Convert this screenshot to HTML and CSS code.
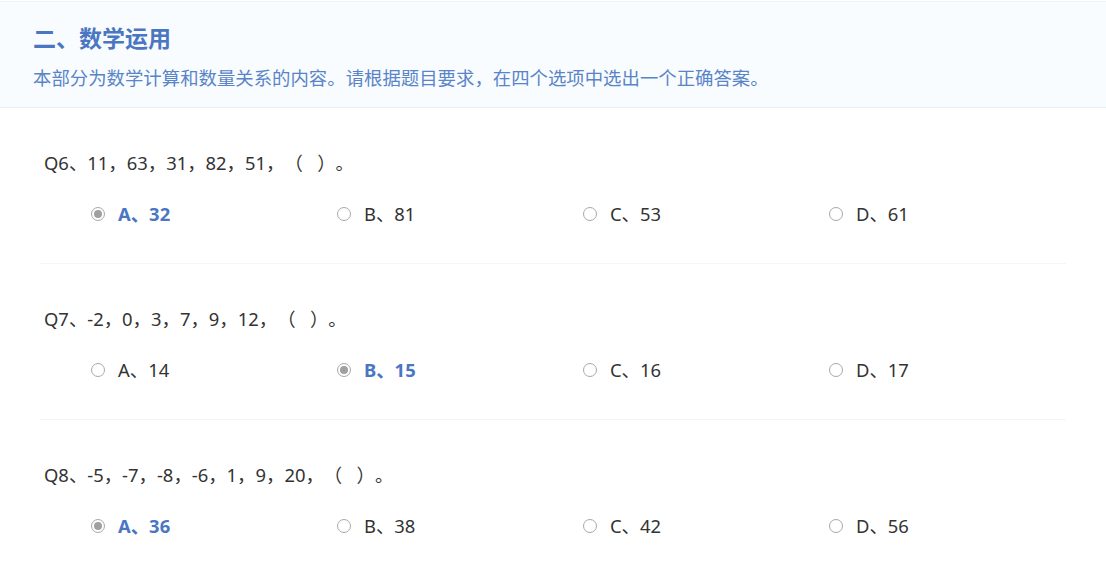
FILE: index.html
```html
<!DOCTYPE html>
<html lang="zh-CN">
<head>
<meta charset="utf-8">
<title>二、数学运用</title>
<link rel="stylesheet" href="styles.css">
</head>
<body>
<header class="section-head">
  <h1 class="section-title">二、数学运用</h1>
  <p class="section-desc">本部分为数学计算和数量关系的内容。请根据题目要求，在四个选项中选出一个正确答案。</p>
</header>
<main class="questions">
  <div class="question">
    <div class="q-text">Q6、11，63，31，82，51，（&nbsp;&nbsp; ）。</div>
    <div class="options">
      <label class="option selected"><span class="radio"></span><span class="opt-label">A、32</span></label>
      <label class="option"><span class="radio"></span><span class="opt-label">B、81</span></label>
      <label class="option"><span class="radio"></span><span class="opt-label">C、53</span></label>
      <label class="option"><span class="radio"></span><span class="opt-label">D、61</span></label>
    </div>
  </div>
  <div class="question">
    <div class="q-text">Q7、-2，0，3，7，9，12，（&nbsp;&nbsp; ）。</div>
    <div class="options">
      <label class="option"><span class="radio"></span><span class="opt-label">A、14</span></label>
      <label class="option selected"><span class="radio"></span><span class="opt-label">B、15</span></label>
      <label class="option"><span class="radio"></span><span class="opt-label">C、16</span></label>
      <label class="option"><span class="radio"></span><span class="opt-label">D、17</span></label>
    </div>
  </div>
  <div class="question">
    <div class="q-text">Q8、-5，-7，-8，-6，1，9，20，（&nbsp;&nbsp; ）。</div>
    <div class="options">
      <label class="option selected"><span class="radio"></span><span class="opt-label">A、36</span></label>
      <label class="option"><span class="radio"></span><span class="opt-label">B、38</span></label>
      <label class="option"><span class="radio"></span><span class="opt-label">C、42</span></label>
      <label class="option"><span class="radio"></span><span class="opt-label">D、56</span></label>
    </div>
  </div>
</main>
</body>
</html>
```
FILE: styles.css
```css
html, body {
  margin: 0;
  padding: 0;
  background: #ffffff;
}
body {
  font-family: "Noto Sans", "Noto Sans CJK SC", sans-serif;
  color: #333333;
  text-spacing-trim: space-all;
}
.section-head {
  margin-top: 1px;
  background: #f8fcfe;
  border-top: 1px solid #e8f5fa;
  border-bottom: 1px solid #e3f1f7;
  padding: 19px 33px 14px;
  height: 72px;
}
.section-title {
  margin: 0;
  font-size: 23px;
  line-height: 32px;
  font-weight: 700;
  color: #4a76c2;
  font-family: "Noto Sans CJK SC", sans-serif;
}
.section-desc {
  margin: 10px 0 0;
  font-size: 18.4px;
  line-height: 28px;
  color: #5a84c8;
  font-family: "Noto Sans CJK SC", sans-serif;
}
.questions {
  padding: 0 40px;
}
.question {
  border-bottom: 1px solid #f1f6f8;
  padding: 41px 0 35px;
}
.q-text {
  padding-left: 4px;
  font-size: 18.4px;
  line-height: 28px;
}
.options {
  display: grid;
  grid-template-columns: repeat(4, 246px);
  margin-top: 23px;
  padding-left: 51px;
}
.option {
  display: flex;
  align-items: center;
  gap: 13px;
  font-size: 18.4px;
  line-height: 28px;
}
.radio {
  width: 12px;
  height: 12px;
  border: 1px solid #a8a8a8;
  border-radius: 50%;
  box-sizing: content-box;
  display: flex;
  align-items: center;
  justify-content: center;
  background: #fff;
}
.option.selected .radio::after {
  content: "";
  width: 8px;
  height: 8px;
  border-radius: 50%;
  background: #a0a0a0;
}
.option.selected .opt-label {
  color: #4a76c2;
  font-weight: 700;
}
```
